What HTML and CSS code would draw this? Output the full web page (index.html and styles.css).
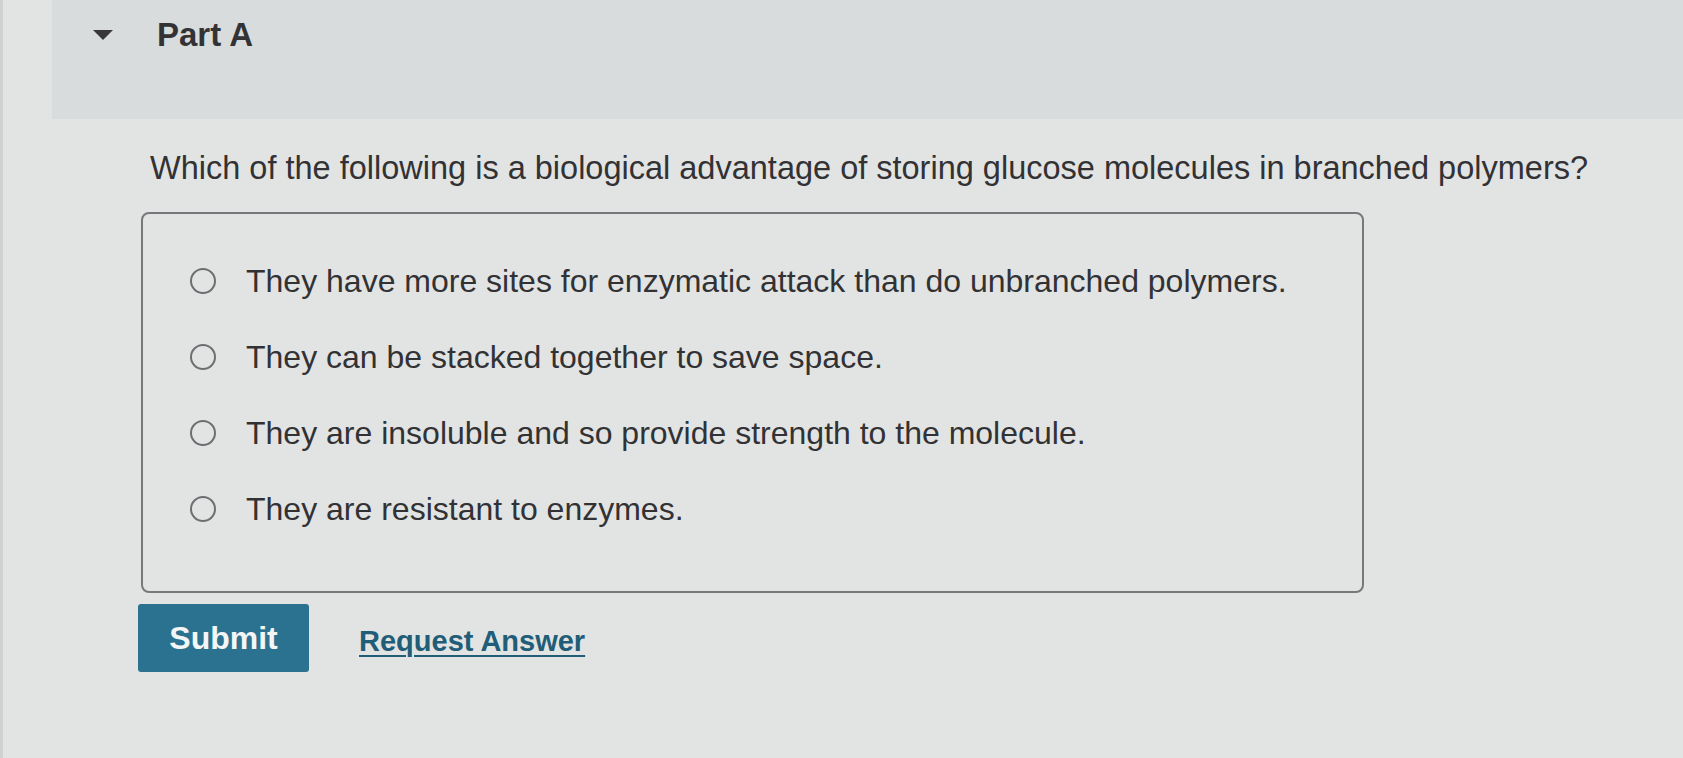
FILE: index.html
```html
<!DOCTYPE html>
<html lang="en">
<head>
    <meta charset="UTF-8">
    <meta name="viewport" content="width=device-width, initial-scale=1.0">
    <title>Part A</title>
    <link rel="stylesheet" href="styles.css">
</head>
<body>

    <div class="part">
        <!-- Cabecera de la parte -->
        <div class="part-head">
            <span class="caret"></span>
            <h2 class="part-title">Part A</h2>
        </div>

        <div class="part-body">
            <p class="question">Which of the following is a biological advantage of storing glucose molecules in branched polymers?</p>

            <!-- Opciones de respuesta -->
            <div class="choices">
                <label class="choice">
                    <input type="radio" name="answer">
                    <span>They have more sites for enzymatic attack than do unbranched polymers.</span>
                </label>
                <label class="choice">
                    <input type="radio" name="answer">
                    <span>They can be stacked together to save space.</span>
                </label>
                <label class="choice">
                    <input type="radio" name="answer">
                    <span>They are insoluble and so provide strength to the molecule.</span>
                </label>
                <label class="choice">
                    <input type="radio" name="answer">
                    <span>They are resistant to enzymes.</span>
                </label>
            </div>

            <div class="actions">
                <button class="submit-button">Submit</button>
                <a href="#" class="request-link">Request Answer</a>
            </div>
        </div>
    </div>

</body>
</html>
```

FILE: styles.css
```css
/* Estilo general */
body {
    font-family: "Liberation Sans", Arial, sans-serif;
    margin: 0;
    padding: 0;
    background-color: #e2e4e3;
    color: #323235;
}

.part {
    min-height: 758px;
    border-left: 3px solid #cfd2d2;
}

/* ========== Cabecera ========== */
.part-head {
    display: flex;
    align-items: flex-start;
    height: 119px;
    margin-left: 49px;
    padding-left: 41px;
    background-color: #d9dcdc;
}

.caret {
    width: 0;
    height: 0;
    margin-top: 30px;
    border-left: 10px solid transparent;
    border-right: 10px solid transparent;
    border-top: 10px solid #38383b;
}

.part-title {
    margin: 15px 0 0 44px;
    font-size: 33px;
    line-height: 40px;
    font-weight: bold;
    color: #333336;
}

/* ========== Pregunta ========== */
.part-body {
    padding-left: 138px;
}

.question {
    margin: 29px 0 24px 9px;
    font-size: 32.5px;
    line-height: 40px;
}

.choices {
    box-sizing: border-box;
    width: 1223px;
    padding: 47px 0 62px 47px;
    border: 2px solid #76797c;
    border-radius: 8px;
    display: flex;
    flex-direction: column;
    gap: 36px;
}

.choice {
    display: flex;
    align-items: center;
    gap: 30px;
    font-size: 32px;
    line-height: 40px;
}

.choice input {
    appearance: none;
    width: 26px;
    height: 26px;
    margin: 0;
    border: 2px solid #6c6e71;
    border-radius: 50%;
    background: transparent;
}

/* ========== Botones ========== */
.actions {
    display: flex;
    align-items: center;
    gap: 50px;
    margin: 11px 0 0 -3px;
}

.submit-button {
    width: 171px;
    height: 68px;
    background-color: #2b7290;
    color: #f4f6f6;
    border: none;
    border-radius: 3px;
    font-family: inherit;
    font-size: 32px;
    font-weight: bold;
    padding: 0;
}

.request-link {
    padding-top: 6px;
    font-size: 29px;
    font-weight: bold;
    color: #1f5d78;
    text-decoration: underline;
    text-decoration-thickness: 2px;
    text-underline-offset: 4px;
}
```
